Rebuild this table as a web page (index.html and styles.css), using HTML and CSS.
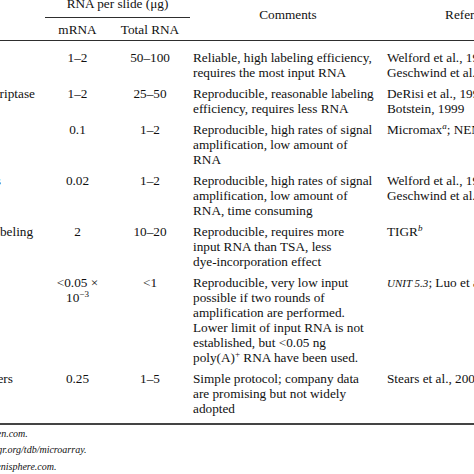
FILE: index.html
```html
<!DOCTYPE html>
<html>
<head>
<meta charset="utf-8">
<link rel="stylesheet" href="styles.css">
</head>
<body>
<div class="page">
  <table class="data">
    <colgroup>
      <col class="c-method">
      <col class="c-mrna">
      <col class="c-total">
      <col class="c-comments">
      <col class="c-refs">
    </colgroup>
    <thead>
      <tr>
        <th class="h-method" rowspan="2">Method</th>
        <th class="h-span" colspan="2">RNA per slide (μg)</th>
        <th class="h-comments" rowspan="2">Comments</th>
        <th class="h-refs" rowspan="2">References</th>
      </tr>
      <tr>
        <th class="h-sub">mRNA</th>
        <th class="h-sub">Total RNA</th>
      </tr>
    </thead>
    <tbody>
      <tr class="first">
        <td class="method">Direct</td>
        <td class="num">1–2</td>
        <td class="num">50–100</td>
        <td class="comment">Reliable, high labeling efficiency,<br>requires the most input RNA</td>
        <td class="ref">Welford et al., 1998;<br>Geschwind et al., 2001</td>
      </tr>
      <tr>
        <td class="method">Reverse transcriptase</td>
        <td class="num">1–2</td>
        <td class="num">25–50</td>
        <td class="comment">Reproducible, reasonable labeling<br>efficiency, requires less RNA</td>
        <td class="ref">DeRisi et al., 1997; Eisen and<br>Botstein, 1999</td>
      </tr>
      <tr>
        <td class="method">TSA</td>
        <td class="num">0.1</td>
        <td class="num">1–2</td>
        <td class="comment">Reproducible, high rates of signal<br>amplification, low amount of<br>RNA</td>
        <td class="ref">Micromax<sup>a</sup>; NEN<sup>a</sup></td>
      </tr>
      <tr>
        <td class="method">Multiple TSAs</td>
        <td class="num">0.02</td>
        <td class="num">1–2</td>
        <td class="comment">Reproducible, high rates of signal<br>amplification, low amount of<br>RNA, time consuming</td>
        <td class="ref">Welford et al., 1998;<br>Geschwind et al., 2001</td>
      </tr>
      <tr>
        <td class="method">Indirect (aa) labeling</td>
        <td class="num">2</td>
        <td class="num">10–20</td>
        <td class="comment">Reproducible, requires more<br>input RNA than TSA, less<br>dye-incorporation effect</td>
        <td class="ref">TIGR<sup>b</sup></td>
      </tr>
      <tr>
        <td class="method">Amplification</td>
        <td class="num">&lt;0.05 ×<br>10<sup>−3</sup></td>
        <td class="num">&lt;1</td>
        <td class="comment">Reproducible, very low input<br>possible if two rounds of<br>amplification are performed.<br>Lower limit of input RNA is not<br>established, but &lt;0.05 ng<br>poly(A)<sup>+</sup> RNA have been used.</td>
        <td class="ref"><i class="unit">UNIT 5.3</i>; Luo et al., 1999</td>
      </tr>
      <tr class="last">
        <td class="method">DNA dendrimers</td>
        <td class="num">0.25</td>
        <td class="num">1–5</td>
        <td class="comment">Simple protocol; company data<br>are promising but not widely<br>adopted</td>
        <td class="ref">Stears et al., 2000</td>
      </tr>
    </tbody>
  </table>
  <div class="notes">
    <p class="note"><sup>a</sup>http://www.nen.com.</p>
    <p class="note"><sup>b</sup>http://www.tigr.org/tdb/microarray.</p>
    <p class="note"><sup>c</sup>http://www.genisphere.com.</p>
  </div>
</div>
</body>
</html>
```

FILE: styles.css
```css
html, body {
  margin: 0;
  padding: 0;
  background: #ffffff;
}
body {
  width: 474px;
  height: 474px;
  overflow: hidden;
  font-family: "Liberation Serif", "Times New Roman", serif;
  color: #111111;
}
.page {
  margin-left: -78px;
  margin-top: -4.5px;
  width: 644px;
}
.data {
  border-collapse: collapse;
  table-layout: fixed;
  width: 644px;
  font-size: 13.25px;
  line-height: 15px;
}
.c-method { width: 123px; }
.c-mrna { width: 65px; }
.c-total { width: 80px; }
.c-comments { width: 193px; }
.c-refs { width: 183px; }

th {
  font-weight: normal;
  padding: 0;
  white-space: nowrap;
}
thead {
  border-bottom: 1px solid #2e2e2e;
}
.h-method {
  text-align: left;
  vertical-align: bottom;
  padding-bottom: 3px;
}
.h-span {
  text-align: center;
  padding-bottom: 6px;
  border-bottom: 1px solid #2e2e2e;
}
.h-sub {
  text-align: center;
  padding-top: 4px;
  padding-bottom: 3px;
}
.h-comments, .h-refs {
  text-align: center;
  vertical-align: middle;
  padding-bottom: 7px;
}
.h-comments { padding-left: 3px; }

td {
  padding: 3px 0;
  vertical-align: top;
  white-space: nowrap;
}
tr.first td { padding-top: 9px; }
tr.last td { padding-bottom: 7px; }
tbody {
  border-bottom: 2px solid #444444;
}
.method { text-align: left; }
.num { text-align: center; }
.comment { padding-left: 3px; text-align: left; }
.ref { padding-left: 4px; text-align: left; }
sup {
  font-size: 9px;
  line-height: 0;
  vertical-align: super;
}
.ref sup { font-style: italic; }
.unit { font-size: 11px; }

.notes {
  padding-left: 20px;
  margin-top: 1px;
}
.note {
  margin: 0;
  font-style: italic;
  font-size: 10px;
  line-height: 16.5px;
}
.note sup { font-size: 7px; }
```
